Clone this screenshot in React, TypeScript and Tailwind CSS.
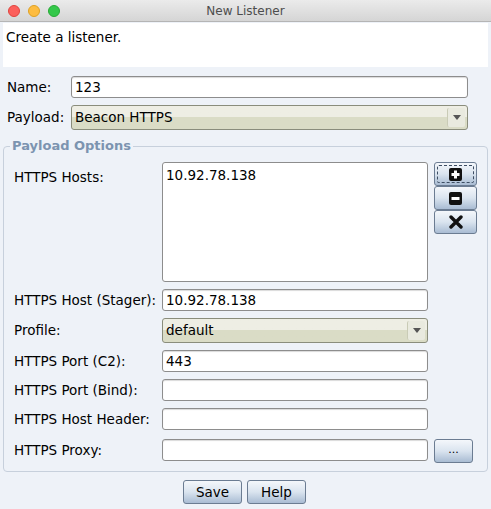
import React from "react";

const font = { fontFamily: '"DejaVu Sans", "Liberation Sans", sans-serif' };

function TextBox({ value = "", className = "" }: { value?: string; className?: string }) {
  return (
    <div
      className={`h-[22px] w-[266px] rounded-[3px] border border-[#8d8d8d] bg-white px-[3px] text-[13.5px] leading-[20px] text-black shadow-[inset_0_1px_1px_rgba(0,0,0,0.15)] ${className}`}
    >
      {value}
    </div>
  );
}

function Combo({ value, className = "" }: { value: string; className?: string }) {
  return (
    <div
      className={`flex h-[25px] items-stretch rounded-[3px] border border-[#8a8d7c] bg-gradient-to-b from-[#eeeee4] from-50% to-[#dadcc6] to-50% text-[13.5px] text-black ${className}`}
    >
      <div className="flex-1 px-[3px] leading-[23px]">{value}</div>
      <div className="my-[2px] mr-[2px] flex w-[18px] items-center justify-center rounded-[2px] border-l border-[#c9cbb6] bg-[#e9eadf]">
        <svg width="8" height="5" viewBox="0 0 8 5">
          <path d="M0 0h8L4 5z" fill="#555" />
        </svg>
      </div>
    </div>
  );
}

function AquaButton({
  children,
  className = "",
  focus = false,
}: {
  children: React.ReactNode;
  className?: string;
  focus?: boolean;
}) {
  return (
    <div
      className={`flex items-center justify-center rounded-[3px] border border-[#6b7c92] bg-gradient-to-b from-[#f4f7fb] via-[#dae4ef] to-[#a9bcd3] text-[13.5px] text-black ${className}`}
    >
      {focus ? (
        <div className="flex h-[calc(100%-4px)] w-[calc(100%-4px)] items-center justify-center rounded-[2px] border border-dashed border-[#3d4d63]">
          {children}
        </div>
      ) : (
        children
      )}
    </div>
  );
}

function Row({ label, children }: { label: string; children: React.ReactNode }) {
  return (
    <div className="flex items-center">
      <div className="w-[148px] whitespace-nowrap text-[13.5px] text-black">{label}</div>
      {children}
    </div>
  );
}

export default function App() {
  return (
    <div style={font} className="flex h-[509px] w-[491px] flex-col overflow-hidden bg-[#eef2f8]">
      {/* title bar */}
      <div className="relative flex h-[22px] shrink-0 items-center justify-center border-b border-[#b5b5b5] bg-gradient-to-b from-[#ebebeb] to-[#d5d5d5]">
        <div className="absolute left-[8px] top-[5px] flex gap-[8px]">
          <span className="h-[12px] w-[12px] rounded-full border border-[#e0443e] bg-[#fc605c]" />
          <span className="h-[12px] w-[12px] rounded-full border border-[#dea123] bg-[#fdbc40]" />
          <span className="h-[12px] w-[12px] rounded-full border border-[#27aa35] bg-[#34c84a]" />
        </div>
        <span className="text-[12px] text-[#4d4d4d]">New Listener</span>
      </div>

      {/* description */}
      <div className="mx-[3px] mt-[1px] h-[44px] bg-white px-[3px] pt-[6px] text-[13.5px] leading-[16px] text-black">
        Create a listener.
      </div>

      {/* name / payload */}
      <div className="mt-[9px] flex flex-col gap-[7px] pl-[7px]">
        <div className="flex items-center">
          <div className="w-[64px] text-[13.5px] text-black">Name:</div>
          <TextBox value="123" className="w-[397px]" />
        </div>
        <div className="flex items-center">
          <div className="w-[64px] text-[13.5px] text-black">Payload:</div>
          <Combo value="Beacon HTTPS" className="w-[397px]" />
        </div>
      </div>

      {/* payload options */}
      <fieldset className="mx-[3px] mt-[8px] h-[334px] rounded-[4px] border border-[#c7d0dc] px-[10px] pt-[8px]">
        <legend className="-ml-[4px] px-[2px] text-[13px] font-bold leading-[16px] text-[#7c94b0]">
          Payload Options
        </legend>

        <div className="flex">
          <div className="w-[148px] pt-[5px] text-[13.5px] text-black">HTTPS Hosts:</div>
          <div className="h-[120px] w-[266px] rounded-[3px] border border-[#8d8d8d] bg-white px-[3px] pt-[2px] text-[13.5px] text-black">
            10.92.78.138
          </div>
          <div className="ml-[6px] flex flex-col">
            <AquaButton focus className="h-[24px] w-[43px]">
              <svg width="13" height="13" viewBox="0 0 13 13">
                <rect width="13" height="13" rx="2" fill="#111" />
                <path d="M5 2.5h3v2.5h2.5v3H8v2.5H5V8H2.5V5H5z" fill="#fff" />
              </svg>
            </AquaButton>
            <AquaButton className="h-[24px] w-[43px]">
              <svg width="13" height="13" viewBox="0 0 13 13">
                <rect width="13" height="13" rx="2" fill="#111" />
                <rect x="2.5" y="5" width="8" height="3" fill="#fff" />
              </svg>
            </AquaButton>
            <AquaButton className="h-[24px] w-[43px]">
              <svg width="14" height="14" viewBox="0 0 14 14">
                <path d="M2 2l10 10M12 2L2 12" stroke="#111" strokeWidth="3.4" strokeLinecap="round" />
              </svg>
            </AquaButton>
          </div>
        </div>

        <div className="mt-[7px] flex flex-col gap-[7px]">
          <Row label="HTTPS Host (Stager):">
            <TextBox value="10.92.78.138" />
          </Row>
          <Row label="Profile:">
            <Combo value="default" className="w-[266px]" />
          </Row>
          <Row label="HTTPS Port (C2):">
            <TextBox value="443" />
          </Row>
          <Row label="HTTPS Port (Bind):">
            <TextBox />
          </Row>
          <Row label="HTTPS Host Header:">
            <TextBox />
          </Row>
          <Row label="HTTPS Proxy:">
            <TextBox />
            <AquaButton className="ml-[6px] mt-[2px] h-[24px] w-[39px] leading-none">
              <span className="pb-[4px] text-[11px]">...</span>
            </AquaButton>
          </Row>
        </div>
      </fieldset>

      {/* footer */}
      <div className="mt-[8px] flex justify-center gap-[5px] pr-[2px]">
        <AquaButton className="h-[24px] w-[59px]">Save</AquaButton>
        <AquaButton className="h-[24px] w-[59px]">Help</AquaButton>
      </div>
    </div>
  );
}
